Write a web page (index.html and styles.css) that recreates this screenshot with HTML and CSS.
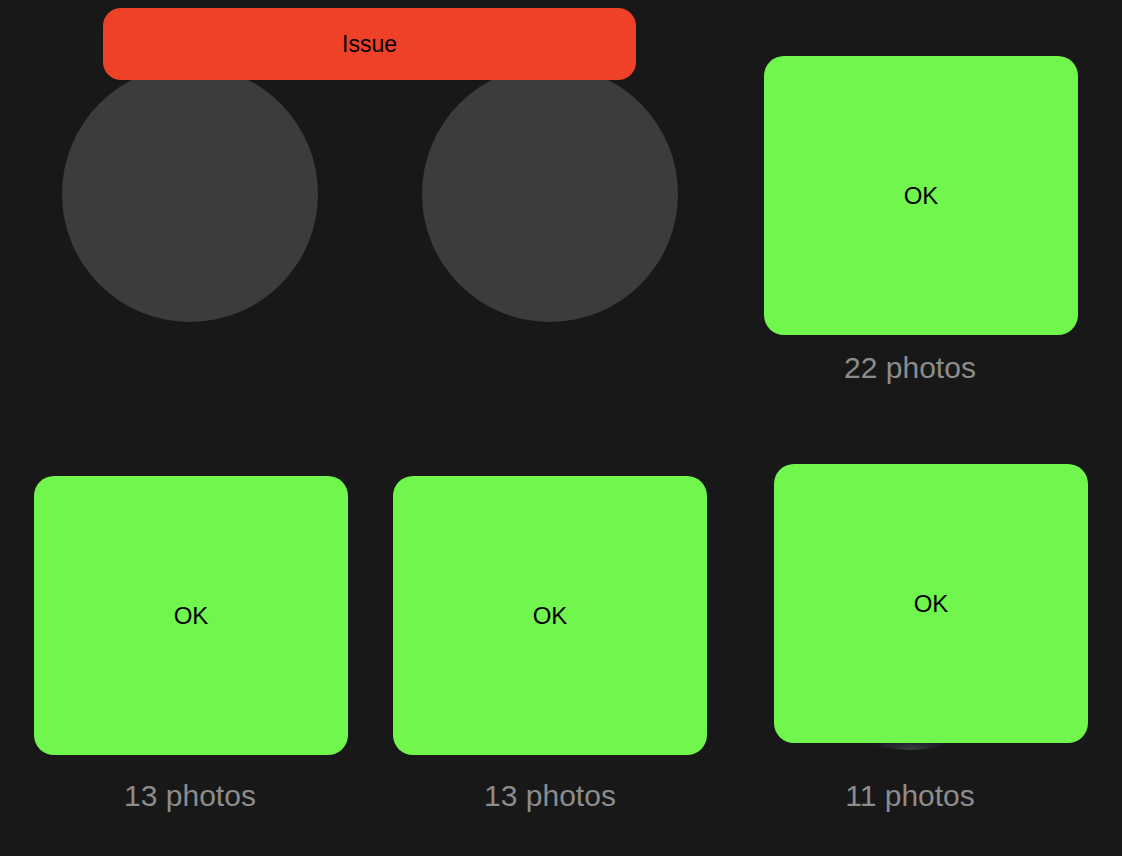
FILE: index.html
```html
<!DOCTYPE html>
<html>
<head>
<meta charset="utf-8">
<link rel="stylesheet" href="styles.css">
</head>
<body>
<main class="grid">
  <div class="issue">Issue</div>

  <div class="album">
    <div class="thumb"></div>
    <div class="count"></div>
  </div>
  <div class="album">
    <div class="thumb"></div>
    <div class="count"></div>
  </div>
  <div class="album">
    <div class="thumb"></div>
    <div class="count">22 photos</div>
    <div class="ok ok-tr">OK</div>
  </div>

  <div class="album">
    <div class="thumb"></div>
    <div class="count">13 photos</div>
    <div class="ok ok-bl">OK</div>
  </div>
  <div class="album">
    <div class="thumb"></div>
    <div class="count">13 photos</div>
    <div class="ok ok-bm">OK</div>
  </div>
  <div class="album">
    <div class="thumb thumb-photo"></div>
    <div class="count">11 photos</div>
    <div class="ok ok-br">OK</div>
  </div>
</main>
</body>
</html>
```

FILE: styles.css
```css
html, body {
  margin: 0;
  padding: 0;
  background: #181818;
  width: 1122px;
  height: 856px;
  overflow: hidden;
  font-family: "Liberation Sans", Arial, sans-serif;
}

.grid {
  position: relative;
  display: grid;
  grid-template-columns: repeat(3, 360px);
  row-gap: 108px;
  padding: 66px 0 0 10px;
}

.album {
  position: relative;
  display: flex;
  flex-direction: column;
  align-items: center;
}

.thumb {
  width: 256px;
  height: 256px;
  border-radius: 50%;
  background: #3c3c3c;
}

.thumb-photo {
  background: radial-gradient(ellipse 40px 12px at 50% 100%, #3b4049 0%, #262a31 45%, #191a1d 100%);
}

.count {
  margin-top: 28px;
  height: 36px;
  line-height: 36px;
  font-size: 30px;
  color: #8c8c8c;
  text-align: center;
}

.ok {
  position: absolute;
  width: 314px;
  height: 279px;
  border-radius: 20px;
  background: #70f64c;
  color: #000;
  font-size: 24px;
  display: flex;
  align-items: center;
  justify-content: center;
}

.ok-tr { left: 34px; top: -10px; }
.ok-bl { left: 24px; top: -18px; }
.ok-bm { left: 23px; top: -18px; }
.ok-br { left: 44px; top: -30px; }

.issue {
  position: absolute;
  left: 103px;
  top: 8px;
  width: 533px;
  height: 72px;
  border-radius: 18px;
  background: #ef4127;
  color: #000;
  font-size: 23px;
  display: flex;
  align-items: center;
  justify-content: center;
  z-index: 2;
}
```
